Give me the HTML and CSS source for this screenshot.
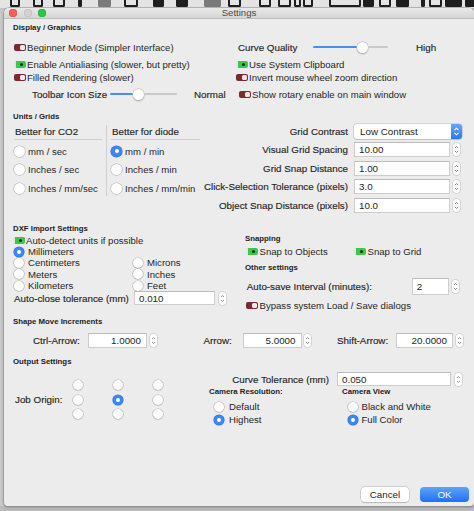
FILE: index.html
```html
<!DOCTYPE html>
<html>
<head>
<meta charset="utf-8">
<title>Settings</title>
<link rel="stylesheet" href="styles.css">
</head>
<body>
<div class="desk">
  <span class="ic"></span><span class="ic"></span><span class="ic"></span><span class="ic solid"></span><span class="ic grey"></span><span class="ic"></span><span class="ic solid"></span><span class="ic solid"></span><span class="ic grey"></span><span class="ic"></span><span class="ic"></span><span class="ic"></span><span class="ic"></span><span class="ic"></span><span class="ic"></span><span class="ic solid"></span><span class="ic"></span><span class="ic solid"></span><span class="ic solid"></span><span class="ic"></span><span class="ic solid"></span><span class="ic solid"></span>
</div>
<div class="shell">
  <div class="lstrip"></div>
  <div class="window">
    <div class="titlebar">
      <div class="lights"><span class="light red"></span><span class="light gray"></span><span class="light green"></span></div>
      <div class="title">Settings</div>
      <div></div>
    </div>
    <div class="content">
      <!-- Display / Graphics -->
      <div class="disp">
        <div class="sec-h">Display / Graphics</div>
        <div class="dgrid">
          <div class="chk"><span class="tg"><i></i></span>Beginner Mode (Simpler Interface)</div>
          <div class="cq"><span class="lbl">Curve Quality</span>
            <span class="slider s2"><span class="l"></span><span class="k"></span><span class="r"></span></span>
            <span class="lbl hi">High</span></div>
          <div class="chk"><span class="tg on"><i></i></span>Enable Antialiasing (slower, but pretty)</div>
          <div class="chk rc"><span class="tg on"><i></i></span>Use System Clipboard</div>
          <div class="chk"><span class="tg"><i></i></span>Filled Rendering (slower)</div>
          <div class="chk rc"><span class="tg"><i></i></span>Invert mouse wheel zoom direction</div>
          <div class="tis"><span class="lbl">Toolbar Icon Size</span>
            <span class="slider s1"><span class="l"></span><span class="k"></span><span class="r"></span></span>
            <span class="lbl nm">Normal</span></div>
          <div class="chk rot"><span class="tg"><i></i></span>Show rotary enable on main window</div>
        </div>
      </div>

      <!-- Units / Grids -->
      <div class="sec-h units-h">Units / Grids</div>
      <div class="ubody">
        <div class="ucol">
          <div class="uhead lbl">Better for CO2</div>
          <div class="rlist">
            <div class="radio"><span class="rb"></span>mm / sec</div>
            <div class="radio"><span class="rb"></span>Inches / sec</div>
            <div class="radio"><span class="rb"></span>Inches / mm/sec</div>
          </div>
        </div>
        <div class="usep"></div>
        <div class="ucol ucol2">
          <div class="uhead lbl">Better for diode</div>
          <div class="rlist">
            <div class="radio"><span class="rb on"></span>mm / min</div>
            <div class="radio"><span class="rb"></span>Inches / min</div>
            <div class="radio"><span class="rb"></span>Inches / mm/min</div>
          </div>
        </div>
        <div class="form">
          <span class="lbl">Grid Contrast</span>
          <div class="select"><span>Low Contrast</span><span class="arr"><svg width="7" height="11" viewBox="0 0 7 11"><path d="M1.5 4.2 L3.5 2.2 L5.5 4.2 M1.5 6.8 L3.5 8.8 L5.5 6.8" fill="none" stroke="#fff" stroke-width="1.1"/></svg></span></div>
          <span class="lbl">Visual Grid Spacing</span>
          <div class="field"><span class="inp w96">10.00</span><span class="spin"><svg width="7" height="13" viewBox="0 0 7 13"><path d="M2 5 L3.5 3.5 L5 5 M2 8 L3.5 9.5 L5 8" fill="none" stroke="#777" stroke-width=".8"/></svg></span></div>
          <span class="lbl">Grid Snap Distance</span>
          <div class="field"><span class="inp w96">1.00</span><span class="spin"><svg width="7" height="13" viewBox="0 0 7 13"><path d="M2 5 L3.5 3.5 L5 5 M2 8 L3.5 9.5 L5 8" fill="none" stroke="#777" stroke-width=".8"/></svg></span></div>
          <span class="lbl">Click-Selection Tolerance (pixels)</span>
          <div class="field"><span class="inp w96">3.0</span><span class="spin"><svg width="7" height="13" viewBox="0 0 7 13"><path d="M2 5 L3.5 3.5 L5 5 M2 8 L3.5 9.5 L5 8" fill="none" stroke="#777" stroke-width=".8"/></svg></span></div>
          <span class="lbl">Object Snap Distance (pixels)</span>
          <div class="field"><span class="inp w96">10.0</span><span class="spin"><svg width="7" height="13" viewBox="0 0 7 13"><path d="M2 5 L3.5 3.5 L5 5 M2 8 L3.5 9.5 L5 8" fill="none" stroke="#777" stroke-width=".8"/></svg></span></div>
        </div>
      </div>

      <!-- DXF + Snapping -->
      <div class="bandc">
        <div class="dxf">
          <div class="sec-h">DXF Import Settings</div>
          <div class="chk dxf-t"><span class="tg on"><i></i></span>Auto-detect units if possible</div>
          <div class="dxf-r">
            <div class="radio r10"><span class="rb on"></span>Millimeters</div>
            <div></div>
            <div class="radio r10"><span class="rb"></span>Centimeters</div>
            <div class="radio r10 c2"><span class="rb"></span>Microns</div>
            <div class="radio r10"><span class="rb"></span>Meters</div>
            <div class="radio r10 c2"><span class="rb"></span>Inches</div>
            <div class="radio r10"><span class="rb"></span>Kilometers</div>
            <div class="radio r10 c2"><span class="rb"></span>Feet</div>
          </div>
          <div class="aclose"><span class="lbl">Auto-close tolerance (mm)</span><span class="inp w81">0.010</span><span class="spin"><svg width="7" height="13" viewBox="0 0 7 13"><path d="M2 5 L3.5 3.5 L5 5 M2 8 L3.5 9.5 L5 8" fill="none" stroke="#777" stroke-width=".8"/></svg></span></div>
        </div>
        <div class="snapcol">
          <div class="sec-h snap-h">Snapping</div>
          <div class="snap-r">
            <div class="chk so"><span class="tg on"><i></i></span>Snap to Objects</div>
            <div class="chk"><span class="tg on"><i></i></span>Snap to Grid</div>
          </div>
          <div class="sec-h oth-h">Other settings</div>
          <div class="asave"><span class="lbl">Auto-save Interval (minutes):</span><span class="inp w37">2</span><span class="spin"><svg width="7" height="13" viewBox="0 0 7 13"><path d="M2 5 L3.5 3.5 L5 5 M2 8 L3.5 9.5 L5 8" fill="none" stroke="#777" stroke-width=".8"/></svg></span></div>
          <div class="chk bypass"><span class="tg"><i></i></span>Bypass system Load / Save dialogs</div>
        </div>
      </div>

      <!-- Shape move -->
      <div class="sec-h smh">Shape Move Increments</div>
      <div class="smr">
        <span class="lbl l1">Ctrl-Arrow:</span><span class="inp num w59">1.0000</span><span class="spin"><svg width="7" height="13" viewBox="0 0 7 13"><path d="M2 5 L3.5 3.5 L5 5 M2 8 L3.5 9.5 L5 8" fill="none" stroke="#777" stroke-width=".8"/></svg></span>
        <span class="lbl l2">Arrow:</span><span class="inp num w59">5.0000</span><span class="spin"><svg width="7" height="13" viewBox="0 0 7 13"><path d="M2 5 L3.5 3.5 L5 5 M2 8 L3.5 9.5 L5 8" fill="none" stroke="#777" stroke-width=".8"/></svg></span>
        <span class="lbl l3">Shift-Arrow:</span><span class="inp num w57">20.0000</span><span class="spin"><svg width="7" height="13" viewBox="0 0 7 13"><path d="M2 5 L3.5 3.5 L5 5 M2 8 L3.5 9.5 L5 8" fill="none" stroke="#777" stroke-width=".8"/></svg></span>
      </div>

      <!-- Output -->
      <div class="sec-h outh">Output Settings</div>
      <div class="bande">
        <div class="jo">
          <span class="lbl">Job Origin:</span>
          <div class="jgrid">
            <span class="rb s10"></span><span class="rb s10"></span><span class="rb s10"></span>
            <span class="rb s10"></span><span class="rb s10 on"></span><span class="rb s10"></span>
            <span class="rb s10"></span><span class="rb s10"></span><span class="rb s10"></span>
          </div>
        </div>
        <div class="outr">
          <div class="ct"><span class="lbl">Curve Tolerance (mm)</span><span class="inp w114">0.050</span><span class="spin"><svg width="7" height="13" viewBox="0 0 7 13"><path d="M2 5 L3.5 3.5 L5 5 M2 8 L3.5 9.5 L5 8" fill="none" stroke="#777" stroke-width=".8"/></svg></span></div>
          <div class="cam">
            <div class="camA">
              <div class="cam-h">Camera Resolution:</div>
              <div class="cam-r">
                <div class="radio r10"><span class="rb"></span>Default</div>
                <div class="radio r10"><span class="rb on"></span>Highest</div>
              </div>
            </div>
            <div class="camB">
              <div class="cam-h">Camera View</div>
              <div class="cam-r">
                <div class="radio r10"><span class="rb"></span>Black and White</div>
                <div class="radio r10"><span class="rb on"></span>Full Color</div>
              </div>
            </div>
          </div>
        </div>
      </div>
    </div>
    <div class="btns">
      <div class="btn cancel">Cancel</div>
      <div class="btn ok">OK</div>
    </div>
  </div>
</div>
</body>
</html>
```

FILE: styles.css
```css
* { box-sizing: border-box; margin: 0; padding: 0; }
body {
  width: 474px; height: 511px; overflow: hidden;
  background: #bcbcbc;
  font-family: "Liberation Sans", Arial, sans-serif;
  font-size: 9.6px; color: #262626;
}

/* background app toolbar peeking at top */
.desk { height: 8px; background: #e4e4e4; display: flex; align-items: flex-start; }
.ic { height: 7px; flex: none; border: 2px solid #1e1e1e; border-top: none; border-radius: 0 0 2px 2px; }
.ic.solid { background: #1e1e1e; }
.ic.grey { background: #7a7a7a; border-color: #7a7a7a; }
.ic:nth-child(1)  { margin-left: 10px; width: 10px; }
.ic:nth-child(2)  { margin-left: 13px; width: 10px; }
.ic:nth-child(3)  { margin-left: 10px; width: 12px; }
.ic:nth-child(4)  { margin-left: 13px; width: 3px; }
.ic:nth-child(5)  { margin-left: 16px; width: 13px; }
.ic:nth-child(6)  { margin-left: 13px; width: 14px; }
.ic:nth-child(7)  { margin-left: 15px; width: 11px; }
.ic:nth-child(8)  { margin-left: 12px; width: 12px; }
.ic:nth-child(9)  { margin-left: 16px; width: 17px; }
.ic:nth-child(10) { margin-left: 7px; width: 13px; }
.ic:nth-child(11) { margin-left: 18px; width: 12px; }
.ic:nth-child(12) { margin-left: 7px; width: 13px; }
.ic:nth-child(13) { margin-left: 3px; width: 7px; }
.ic:nth-child(14) { margin-left: 2px; width: 10px; }
.ic:nth-child(15) { margin-left: 16px; width: 32px; }
.ic:nth-child(16) { margin-left: 2px; width: 11px; }
.ic:nth-child(17) { margin-left: 5px; width: 12px; }
.ic:nth-child(18) { margin-left: 5px; width: 13px; }
.ic:nth-child(19) { margin-left: 12px; width: 3px; }
.ic:nth-child(20) { margin-left: 4px; width: 13px; }
.ic:nth-child(21) { margin-left: 3px; width: 17px; }
.ic:nth-child(22) { margin-left: 3px; width: 11px; }

.shell { display: flex; height: 498px; }
.lstrip { width: 4px; flex: none; background: #c8c8c8; }
.window {
  width: 470px; height: 498px; flex: none;
  background: #ececec;
  border-radius: 5px 5px 4px 4px;
  box-shadow: 0 0 0 0.5px #8c8c8c, 0 1px 3px rgba(0,0,0,0.35);
  display: flex; flex-direction: column; overflow: hidden;
}
.titlebar {
  height: 11px; flex: none;
  background: linear-gradient(#e9e9e9, #d5d5d5);
  border-bottom: 1px solid #bdbdbd;
  display: grid; grid-template-columns: 1fr auto 1fr; align-items: center;
}
.lights { display: flex; align-items: center; padding-left: 5px; gap: 7px; }
.light { width: 8px; height: 8px; border-radius: 50%; flex: none; }
.red { background: #fc5f57; box-shadow: inset 0 0 0 0.5px #dd4a41; }
.gray { background: #d1d1d1; box-shadow: inset 0 0 0 0.5px #bdbdbd; }
.green { background: #2bc642; box-shadow: inset 0 0 0 0.5px #20a834; margin-left: -1px; }
.title { font-size: 9.6px; color: #4b4b4b; line-height: 10px; }

.content { padding-left: 9px; flex: 1; }
.sec-h { font-weight: bold; font-size: 7.8px; line-height: 12px; height: 12px; color: #222; white-space: nowrap; }
.lbl { font-size: 9.8px; -webkit-text-stroke: 0.15px #262626; white-space: nowrap; }

/* toggles (Qt checkbox look) */
.chk { display: flex; align-items: center; gap: 1px; white-space: nowrap; }
.tg {
  width: 12px; height: 7px; flex: none; border-radius: 2px;
  background: #7b2a30;
  display: flex; align-items: center; justify-content: flex-end; padding: 0 1px;
}
.tg i { display: block; width: 5px; height: 5px; border-radius: 1.5px; background: #f2e6e6; }
.tg.on { background: #3ec64b; justify-content: center; border-left: 2px solid #dfe9df; }
.tg.on i { width: 3px; height: 3px; border-radius: 50%; background: #143814; }

/* sliders */
.slider { display: flex; align-items: center; flex: none; }
.slider .l { height: 2.5px; background: #4b8ef2; border-radius: 1px; }
.slider .r { height: 2.5px; background: #cacaca; border-radius: 1px; }
.slider .k {
  width: 11px; height: 11px; border-radius: 50%; flex: none; background: #fff;
  box-shadow: 0 0 0 0.5px #b4b4b4, 0 1px 1.5px rgba(0,0,0,0.3);
}
.s1 .l { width: 22.5px; } .s1 .r { width: 33.5px; }
.s2 .l { width: 43.5px; } .s2 .r { width: 20.5px; }

/* display grid */
.disp { padding-top: 3px; }
.dgrid {
  margin-top: 2.5px;
  display: grid; grid-template-columns: 223px 238px;
  grid-template-rows: 21px 13px 13px 21px; align-items: center;
}
.dgrid > .chk:not(.rc):not(.rot) .tg { margin-left: 1px; }
.cq { display: flex; align-items: center; padding-left: 2px; }
.cq > .lbl:first-child { width: 75px; }
.cq .hi { margin-left: 28px; }
.tis { display: flex; align-items: center; padding-left: 19px; }
.tis > .lbl:first-child { width: 78px; }
.tis .nm { margin-left: 17px; }
.rot { padding-left: 3px; }

/* radios */
.radio { display: flex; align-items: center; gap: 3px; white-space: nowrap; }
.rb {
  width: 11px; height: 11px; border-radius: 50%; flex: none; background: #fff;
  box-shadow: 0 0 0 0.6px #b3b3b3, 0 0.6px 1px rgba(0,0,0,0.15);
  display: flex; align-items: center; justify-content: center;
}
.rb.on { background: #3a87f5; box-shadow: 0 0 0 0.6px #2e73e0; }
.rb.on::after { content: ""; width: 4px; height: 4px; border-radius: 50%; background: #fff; }
.r10 .rb, .rb.s10 { width: 10px; height: 10px; }
.r10 { gap: 4px; }

/* units */
.units-h { margin-top: 6.5px; }
.ubody { display: flex; align-items: flex-start; }
.ucol { width: 88px; margin-left: 1px; flex: none; }
.ucol2 { width: 89px; margin-left: 4px; }
.uhead { padding: 3px 0 1px 1px; line-height: 12px; border-bottom: 1px solid #cdcdcd; }
.rlist { margin-top: 2px; display: grid; grid-auto-rows: 18.5px; align-items: center; }
.usep { width: 1px; height: 71px; margin: 2px 0 0 4px; background: #d0d0d0; flex: none; }
.form {
  margin-top: -1px;
  display: grid; grid-template-columns: 148px 108px; column-gap: 6px;
  grid-auto-rows: 18.5px; align-items: center;
}
.form > .lbl { text-align: right; }
.field { display: flex; align-items: center; gap: 3px; }

.inp {
  height: 15px; flex: none; background: #fff;
  border: 1px solid #cdcdcd; border-top-color: #bcbcbc;
  display: flex; align-items: center; padding-left: 4px;
  font-size: 9.8px; white-space: nowrap;
}
.inp.num { justify-content: flex-end; padding: 0 5px 0 0; }
.w96 { width: 96px; } .w81 { width: 81px; height: 14px; } .w37 { width: 37px; height: 17px; }
.w59 { width: 59px; } .w57 { width: 57px; } .w114 { width: 114px; height: 14px; }
.spin {
  width: 7px; height: 13px; flex: none; display: flex;
  background: #fff; border-radius: 3px; box-shadow: 0 0 0 0.5px #bdbdbd;
}
.select {
  width: 108px; height: 15px; border-radius: 3px; background: #fff;
  box-shadow: 0 0 0 0.5px #b9b9b9, 0 1px 1px rgba(0,0,0,0.15);
  display: flex; align-items: center; font-size: 9.8px;
}
.select > span:first-child { flex: 1; padding-left: 6px; }
.select .arr {
  width: 11px; height: 15px; border-radius: 0 3px 3px 0;
  background: linear-gradient(#64a7fb, #2a79f0);
  display: flex; align-items: center; justify-content: center;
}

/* DXF + snapping */
.bandc { margin-top: 8.5px; display: grid; grid-template-columns: 232px 229px; align-items: start; }
.dxf-t { height: 11px; }
.dxf-r { display: grid; grid-template-columns: 120px 1fr; grid-auto-rows: 11.3px; align-items: center; }
.dxf-r .radio:not(.c2) { padding-left: 1px; }
.aclose { height: 14px; display: flex; align-items: center; padding-left: 1px; }
.aclose .lbl { width: 120px; }
.aclose .spin, .ct .spin { margin-left: 4px; }
.snap-h { margin-top: 10px; }
.snap-r { height: 13px; display: flex; align-items: center; padding-left: 1px; }
.snap-r .chk { gap: 1.5px; }
.so { width: 108px; }
.oth-h { margin-top: 4px; }
.asave { margin-top: 4px; height: 17px; display: flex; align-items: center; padding-left: 1.7px; }
.asave .lbl { width: 165px; }
.asave .spin { margin-left: 3px; }
.bypass { margin-top: 5px; height: 11px; padding-left: 1px; gap: 1.5px; }

/* shape move */
.smh { margin-top: 5px; }
.smr { margin-top: 5px; height: 15px; display: flex; align-items: center; }
.smr .spin { margin-left: 2.5px; }
.l1 { margin-left: 20px; width: 55px; }
.l2 { margin-left: 47px; width: 39px; }
.l3 { margin-left: 26px; width: 59px; }

/* output */
.outh { margin-top: 8px; }
.bande { display: grid; grid-template-columns: 192px 269px; align-items: start; }
.jo { margin-top: 9.75px; display: flex; align-items: center; }
.jo > .lbl { width: 60px; padding-left: 2px; }
.jgrid { display: grid; grid-template-columns: repeat(3, 10px); column-gap: 30px; grid-auto-rows: 14.5px; align-items: center; }
.ct { margin-top: 4px; height: 14px; display: flex; align-items: center; }
.ct .lbl { width: 124px; text-align: right; }
.ct .inp { margin-left: 8px; }
.cam { display: flex; }
.camA { width: 137px; padding-left: 4px; flex: none; }
.cam-h { font-weight: bold; font-size: 7.8px; line-height: 12px; color: #222; white-space: nowrap; }
.cam-r { margin-top: 2px; display: grid; grid-auto-rows: 13px; align-items: center; }
.camA .radio { padding-left: 5px; gap: 5px; }
.camB .radio { padding-left: 6px; gap: 3.5px; }

/* buttons */
.btns { margin-top: auto; display: flex; justify-content: flex-end; gap: 11px; padding: 0 5px 4px 0; flex: none; }
.btn { width: 48px; height: 15px; border-radius: 4px; display: flex; align-items: center; justify-content: center; font-size: 9.8px; }
.cancel { background: #fff; box-shadow: 0 0 0 0.5px #b8b8b8, 0 0.5px 1px rgba(0,0,0,0.2); }
.ok { width: 49px; background: linear-gradient(#5fa3fb, #1f72f0); color: #fff; }
```
